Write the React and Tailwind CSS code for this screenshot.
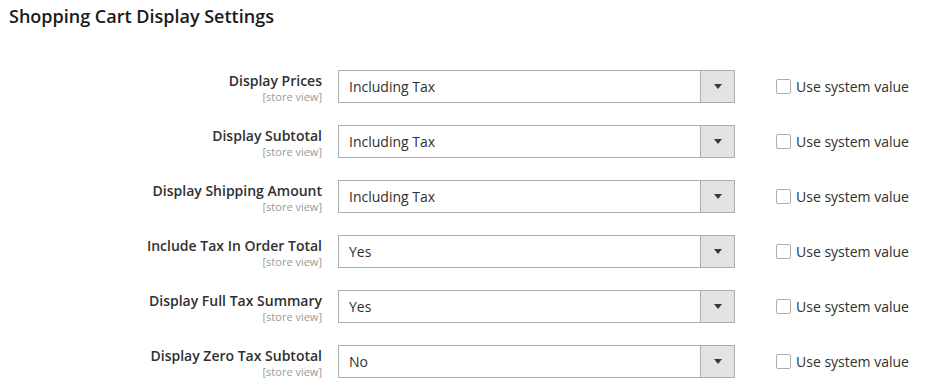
import React from 'react';

const rows = [
  { label: 'Display Prices', value: 'Including Tax' },
  { label: 'Display Subtotal', value: 'Including Tax' },
  { label: 'Display Shipping Amount', value: 'Including Tax' },
  { label: 'Include Tax In Order Total', value: 'Yes' },
  { label: 'Display Full Tax Summary', value: 'Yes' },
  { label: 'Display Zero Tax Subtotal', value: 'No' },
];

const Row = ({ label, value }) => (
  <div className="flex items-start h-[55px]">
    <div className="w-[322px] flex flex-col items-end pt-[1px]">
      <span className="text-[14px] leading-[19px] font-semibold text-[#303030]">{label}</span>
      <span className="text-[11px] leading-[13px] text-[#999999]">[store view]</span>
    </div>
    <div className="ml-[16px] w-[397px] h-[33px] border border-[#adadad] bg-white flex">
      <div className="flex-1 flex items-center pl-[10px] text-[14px] text-[#303030]">{value}</div>
      <div className="w-[34px] bg-[#e3e3e3] border-l border-[#adadad] flex items-center justify-center">
        <svg width="8" height="5" viewBox="0 0 8 5">
          <path d="M0 0 L8 0 L4 5 Z" fill="#41362f" />
        </svg>
      </div>
    </div>
    <label className="ml-[41px] h-[33px] flex items-center gap-[5px]">
      <span className="w-[15px] h-[15px] border border-[#adadad] rounded-[2px] bg-white" />
      <span className="text-[14px] text-[#303030]">Use system value</span>
    </label>
  </div>
);

export default function App() {
  return (
    <div className="w-[926px] h-[390px] bg-white overflow-hidden" style={{ fontFamily: '"Open Sans", sans-serif' }}>
      <h2 className="pl-[9px] pt-[4px] text-[18px] leading-[25px] font-semibold text-[#1a1a1a]">
        Shopping Cart Display Settings
      </h2>
      <div className="mt-[41px] flex flex-col">
        {rows.map((r) => (
          <Row key={r.label} {...r} />
        ))}
      </div>
    </div>
  );
}
